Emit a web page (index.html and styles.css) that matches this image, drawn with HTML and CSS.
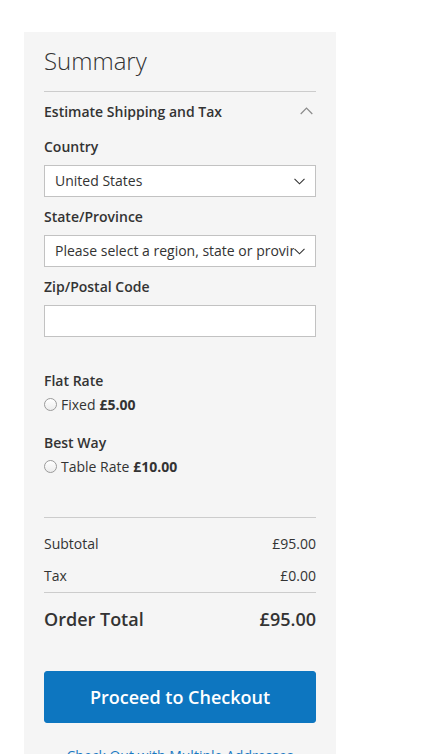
FILE: index.html
```html
<!DOCTYPE html>
<html lang="en">
<head>
<meta charset="utf-8">
<title>Summary</title>
<link rel="stylesheet" href="styles.css">
</head>
<body>
<div class="summary">
  <h2 class="title">Summary</h2>
  <div class="shipping">
    <div class="block-title">
      <strong>Estimate Shipping and Tax</strong>
      <svg class="chev-up" width="13" height="8" viewBox="0 0 13 8"><polyline points="0.7,7 6.5,1.2 12.3,7" fill="none" stroke="#8a8a8a" stroke-width="1.2"/></svg>
    </div>
    <div class="field">
      <label class="label">Country</label>
      <div class="select"><span class="value">United States</span><svg class="chev" width="11" height="7" viewBox="0 0 11 7"><polyline points="0.5,0.8 5.5,5.8 10.5,0.8" fill="none" stroke="#333" stroke-width="1.1"/></svg></div>
    </div>
    <div class="field">
      <label class="label">State/Province</label>
      <div class="select"><span class="value">Please select a region, state or province.</span><svg class="chev" width="11" height="7" viewBox="0 0 11 7"><polyline points="0.5,0.8 5.5,5.8 10.5,0.8" fill="none" stroke="#333" stroke-width="1.1"/></svg></div>
    </div>
    <div class="field">
      <label class="label">Zip/Postal Code</label>
      <div class="input"></div>
    </div>
    <dl class="rates">
      <dt class="method">Flat Rate</dt>
      <dd class="rate"><span class="radio"></span>Fixed <b>£5.00</b></dd>
      <dt class="method">Best Way</dt>
      <dd class="rate"><span class="radio"></span>Table Rate <b>£10.00</b></dd>
    </dl>
  </div>
  <div class="totals">
    <div class="row"><span>Subtotal</span><span>£95.00</span></div>
    <div class="row"><span>Tax</span><span>£0.00</span></div>
    <div class="row grand"><strong>Order Total</strong><strong>£95.00</strong></div>
  </div>
  <button class="checkout" type="button">Proceed to Checkout</button>
  <a class="multi" href="#">Check Out with Multiple Addresses</a>
</div>
</body>
</html>
```

FILE: styles.css
```css
html, body {
  margin: 0;
  padding: 0;
  background: #fff;
}
body {
  font-family: "Open Sans", "Liberation Sans", sans-serif;
  font-size: 14px;
  line-height: 20px;
  color: #333;
}
.summary {
  margin: 32px 0 0 24px;
  width: 312px;
  box-sizing: border-box;
  background: #f5f5f5;
  padding: 14px 20px 25px;
  min-height: 740px;
}
.title {
  margin: 0 0 15px;
  font-size: 24px;
  line-height: 30px;
  font-weight: 300;
  color: #333;
}
.shipping {
  border-top: 1px solid #cccccc;
  padding-bottom: 40px;
}
.block-title {
  padding-top: 10px;
  margin-bottom: 15px;
  display: flex;
  justify-content: space-between;
  align-items: center;
}
.block-title strong {
  font-weight: 600;
}
.chev-up {
  margin-right: 3px;
  margin-bottom: 3px;
}
.field {
  margin-bottom: 10px;
}
.label {
  display: block;
  font-weight: 600;
  margin-bottom: 8px;
}
.select, .input {
  height: 32px;
  box-sizing: border-box;
  background: #fff;
  border: 1px solid #c2c2c2;
}
.select {
  display: flex;
  align-items: center;
  padding: 0 10px 0 10px;
}
.value {
  flex: 1;
  min-width: 0;
  overflow: hidden;
  white-space: nowrap;
}
.chev {
  flex: none;
  margin-left: 0;
}
.rates {
  margin: 34px 0 0;
}
.method {
  font-weight: 600;
}
.rate {
  margin: 4px 0 18px;
  display: flex;
  align-items: center;
}
.rate:last-child {
  margin-bottom: 0;
}
.rate b {
  font-weight: 700;
  margin-left: 4px;
}
.radio {
  width: 13px;
  height: 13px;
  box-sizing: border-box;
  border-radius: 50%;
  border: 1px solid #9a9a9a;
  background: linear-gradient(#ffffff, #ececec);
  margin-right: 4px;
  margin-top: -1px;
}
.totals {
  border-top: 1px solid #cccccc;
  padding-top: 10px;
}
.row {
  display: flex;
  justify-content: space-between;
  padding: 6px 0;
}
.grand {
  border-top: 1px solid #cccccc;
  padding: 13px 0 14px;
  font-size: 18px;
  line-height: 26px;
}
.grand strong {
  font-weight: 600;
}
.checkout {
  display: block;
  width: 100%;
  margin-top: 25px;
  height: 52px;
  box-sizing: border-box;
  border: 1px solid #0d76c0;
  border-radius: 3px;
  background: #0d76c0;
  color: #fff;
  font-family: "Open Sans", "Liberation Sans", sans-serif;
  font-size: 18px;
  line-height: 22px;
  font-weight: 600;
  padding: 14px 17px;
}
.multi {
  display: block;
  margin-top: 23px;
  text-align: center;
  color: #1979c3;
  text-decoration: none;
}
```
